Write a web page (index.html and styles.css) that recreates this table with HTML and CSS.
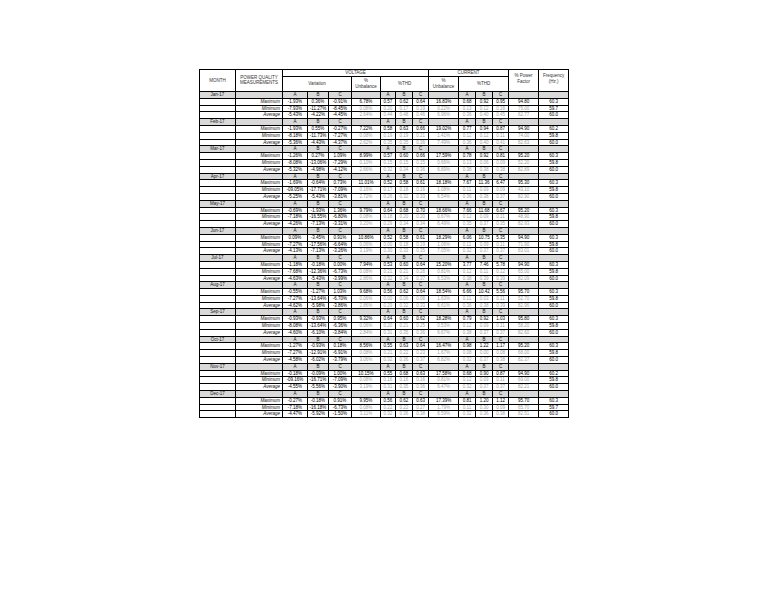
FILE: index.html
```html
<!DOCTYPE html>
<html>
<head>
<meta charset="utf-8">
<link rel="stylesheet" href="styles.css">
</head>
<body>
<table class="sheet">
<colgroup>
<col class="c-month"><col class="c-pq"><col class="c-va"><col class="c-vb"><col class="c-vc"><col class="c-vu"><col class="c-ta"><col class="c-tb"><col class="c-tc"><col class="c-cu"><col class="c-ca"><col class="c-cb"><col class="c-cc"><col class="c-pf"><col class="c-fr">
</colgroup>
<thead>
<tr class="h1">
<th rowspan="2">MONTH</th>
<th rowspan="2">POWER QUALITY<br>MEASUREMENTS</th>
<th colspan="7">VOLTAGE</th>
<th colspan="4">CURRENT</th>
<th rowspan="2" class="top">% Power<br>Factor</th>
<th rowspan="2" class="top">Frequency<br>(Hz.)</th>
</tr>
<tr class="h2">
<th colspan="3">Variation</th>
<th>%<br>Unbalance</th>
<th colspan="3">%THD</th>
<th>%<br>Unbalance</th>
<th colspan="3">%THD</th>
</tr>
</thead>
<tbody>
<tr class="mh"><td>Jan-17</td><td></td><td>A</td><td>B</td><td>C</td><td></td><td>A</td><td>B</td><td>C</td><td></td><td>A</td><td>B</td><td>C</td><td></td><td></td></tr>
<tr><td></td><td class="lbl">Maximum</td><td>-1.93%</td><td>0.36%</td><td>-0.91%</td><td>6.78%</td><td>0.57</td><td>0.62</td><td>0.64</td><td>16.83%</td><td>0.68</td><td>0.92</td><td>0.95</td><td>94.80</td><td>60.3</td></tr>
<tr class="lt"><td></td><td class="lbl">Minimum</td><td>-7.93%</td><td>-11.27%</td><td>-8.45%</td><td class="g">0.08%</td><td class="g">0.20</td><td class="g">0.17</td><td class="g">0.19</td><td class="g">0.22%</td><td class="g">0.13</td><td class="g">0.12</td><td class="g">0.16</td><td class="g">75.00</td><td>59.7</td></tr>
<tr class="lt"><td></td><td class="lbl">Average</td><td>-5.43%</td><td>-4.22%</td><td>-4.45%</td><td class="g">2.64%</td><td class="g">0.44</td><td class="g">0.48</td><td class="g">0.46</td><td class="g">6.96%</td><td class="g">0.36</td><td class="g">0.40</td><td class="g">0.45</td><td class="g">62.77</td><td>60.0</td></tr>

<tr class="mh"><td>Feb-17</td><td></td><td>A</td><td>B</td><td>C</td><td></td><td>A</td><td>B</td><td>C</td><td></td><td>A</td><td>B</td><td>C</td><td></td><td></td></tr>
<tr><td></td><td class="lbl">Maximum</td><td>-1.93%</td><td>0.55%</td><td>-0.27%</td><td>7.22%</td><td>0.58</td><td>0.63</td><td>0.66</td><td>19.02%</td><td>0.77</td><td>0.94</td><td>0.87</td><td>94.90</td><td>60.2</td></tr>
<tr class="lt"><td></td><td class="lbl">Minimum</td><td>-8.18%</td><td>-11.73%</td><td>-7.27%</td><td class="g">0.08%</td><td class="g">0.19</td><td class="g">0.19</td><td class="g">0.21</td><td class="g">1.41%</td><td class="g">0.12</td><td class="g">0.12</td><td class="g">0.11</td><td class="g">74.00</td><td>59.8</td></tr>
<tr class="lt"><td></td><td class="lbl">Average</td><td>-5.36%</td><td>-4.43%</td><td>-4.37%</td><td class="g">2.62%</td><td class="g">0.35</td><td class="g">0.35</td><td class="g">0.36</td><td class="g">7.49%</td><td class="g">0.36</td><td class="g">0.40</td><td class="g">0.41</td><td class="g">82.63</td><td>60.0</td></tr>

<tr class="mh"><td>Mar-17</td><td></td><td>A</td><td>B</td><td>C</td><td></td><td>A</td><td>B</td><td>C</td><td></td><td>A</td><td>B</td><td>C</td><td></td><td></td></tr>
<tr><td></td><td class="lbl">Maximum</td><td>-1.26%</td><td>0.27%</td><td>1.09%</td><td>8.99%</td><td>0.57</td><td>0.60</td><td>0.66</td><td>17.59%</td><td>0.78</td><td>0.92</td><td>0.81</td><td>95.20</td><td>60.3</td></tr>
<tr class="lt"><td></td><td class="lbl">Minimum</td><td>-8.08%</td><td>-13.06%</td><td>-7.29%</td><td class="g">0.10%</td><td class="g">0.15</td><td class="g">0.15</td><td class="g">0.15</td><td class="g">0.66%</td><td class="g">0.13</td><td class="g">0.06</td><td class="g">0.09</td><td class="g">52.20</td><td>59.8</td></tr>
<tr class="lt"><td></td><td class="lbl">Average</td><td>-5.32%</td><td>-4.98%</td><td>-4.12%</td><td class="g">2.66%</td><td class="g">0.32</td><td class="g">0.34</td><td class="g">0.36</td><td class="g">6.89%</td><td class="g">0.38</td><td class="g">0.38</td><td class="g">0.38</td><td class="g">82.89</td><td>60.0</td></tr>

<tr class="mh"><td>Apr-17</td><td></td><td>A</td><td>B</td><td>C</td><td></td><td>A</td><td>B</td><td>C</td><td></td><td>A</td><td>B</td><td>C</td><td></td><td></td></tr>
<tr><td></td><td class="lbl">Maximum</td><td>-1.69%</td><td>-0.64%</td><td>0.73%</td><td>11.01%</td><td>0.52</td><td>0.58</td><td>0.61</td><td>18.18%</td><td>7.67</td><td>11.36</td><td>6.47</td><td>95.30</td><td>60.3</td></tr>
<tr class="lt"><td></td><td class="lbl">Minimum</td><td>-09.05%</td><td>-17.71%</td><td>-7.09%</td><td class="g">0.16%</td><td class="g">0.17</td><td class="g">0.18</td><td class="g">0.16</td><td class="g">1.08%</td><td class="g">0.11</td><td class="g">0.09</td><td class="g">0.09</td><td class="g">43.10</td><td>59.8</td></tr>
<tr class="lt"><td></td><td class="lbl">Average</td><td>-5.25%</td><td>-5.43%</td><td>-3.81%</td><td class="g">2.72%</td><td class="g">0.26</td><td class="g">0.32</td><td class="g">0.33</td><td class="g">6.54%</td><td class="g">0.36</td><td class="g">0.38</td><td class="g">0.37</td><td class="g">82.90</td><td>60.0</td></tr>

<tr class="mh"><td>May-17</td><td></td><td>A</td><td>B</td><td>C</td><td></td><td>A</td><td>B</td><td>C</td><td></td><td>A</td><td>B</td><td>C</td><td></td><td></td></tr>
<tr><td></td><td class="lbl">Maximum</td><td>-0.69%</td><td>-1.93%</td><td>1.36%</td><td>9.79%</td><td>0.64</td><td>0.68</td><td>0.70</td><td>18.66%</td><td>7.66</td><td>11.68</td><td>6.67</td><td>95.20</td><td>60.3</td></tr>
<tr class="lt"><td></td><td class="lbl">Minimum</td><td>-7.18%</td><td>-16.55%</td><td>-6.80%</td><td class="g">0.08%</td><td class="g">0.18</td><td class="g">0.20</td><td class="g">0.20</td><td class="g">0.67%</td><td class="g">0.12</td><td class="g">0.09</td><td class="g">0.11</td><td class="g">48.90</td><td>59.8</td></tr>
<tr class="lt"><td></td><td class="lbl">Average</td><td>-4.26%</td><td>-7.13%</td><td>-3.31%</td><td class="g">3.20%</td><td class="g">0.29</td><td class="g">0.34</td><td class="g">0.34</td><td class="g">6.49%</td><td class="g">0.35</td><td class="g">0.37</td><td class="g">0.35</td><td class="g">82.93</td><td>60.0</td></tr>

<tr class="mh"><td>Jun-17</td><td></td><td>A</td><td>B</td><td>C</td><td></td><td>A</td><td>B</td><td>C</td><td></td><td>A</td><td>B</td><td>C</td><td></td><td></td></tr>
<tr><td></td><td class="lbl">Maximum</td><td>0.09%</td><td>-3.45%</td><td>0.91%</td><td>10.86%</td><td>0.52</td><td>0.58</td><td>0.61</td><td>18.29%</td><td>6.06</td><td>10.75</td><td>5.35</td><td>94.90</td><td>60.3</td></tr>
<tr class="lt"><td></td><td class="lbl">Minimum</td><td>-7.27%</td><td>-17.56%</td><td>-6.64%</td><td class="g">0.06%</td><td class="g">0.00</td><td class="g">0.18</td><td class="g">0.19</td><td class="g">1.06%</td><td class="g">0.11</td><td class="g">0.09</td><td class="g">0.11</td><td class="g">71.90</td><td>59.8</td></tr>
<tr class="lt"><td></td><td class="lbl">Average</td><td>-4.13%</td><td>-7.13%</td><td>-3.26%</td><td class="g">3.19%</td><td class="g">0.30</td><td class="g">0.33</td><td class="g">0.35</td><td class="g">7.05%</td><td class="g">0.32</td><td class="g">0.37</td><td class="g">0.37</td><td class="g">83.01</td><td>60.0</td></tr>

<tr class="mh"><td>Jul-17</td><td></td><td>A</td><td>B</td><td>C</td><td></td><td>A</td><td>B</td><td>C</td><td></td><td>A</td><td>B</td><td>C</td><td></td><td></td></tr>
<tr><td></td><td class="lbl">Maximum</td><td>-1.18%</td><td>-0.18%</td><td>0.00%</td><td>7.94%</td><td>0.53</td><td>0.60</td><td>0.64</td><td>15.20%</td><td>3.77</td><td>7.46</td><td>5.78</td><td>94.90</td><td>60.3</td></tr>
<tr class="lt"><td></td><td class="lbl">Minimum</td><td>-7.68%</td><td>-12.36%</td><td>-6.73%</td><td class="g">0.08%</td><td class="g">0.21</td><td class="g">0.21</td><td class="g">0.26</td><td class="g">0.81%</td><td class="g">0.12</td><td class="g">0.11</td><td class="g">0.12</td><td class="g">65.00</td><td>59.8</td></tr>
<tr class="lt"><td></td><td class="lbl">Average</td><td>-4.63%</td><td>-5.43%</td><td>-3.99%</td><td class="g">2.86%</td><td class="g">0.32</td><td class="g">0.34</td><td class="g">0.37</td><td class="g">6.53%</td><td class="g">0.38</td><td class="g">0.39</td><td class="g">0.39</td><td class="g">82.09</td><td>60.0</td></tr>

<tr class="mh"><td>Aug-17</td><td></td><td>A</td><td>B</td><td>C</td><td></td><td>A</td><td>B</td><td>C</td><td></td><td>A</td><td>B</td><td>C</td><td></td><td></td></tr>
<tr><td></td><td class="lbl">Maximum</td><td>-0.55%</td><td>-1.27%</td><td>1.03%</td><td>9.68%</td><td>0.56</td><td>0.62</td><td>0.64</td><td>18.54%</td><td>6.66</td><td>10.42</td><td>5.56</td><td>95.70</td><td>60.3</td></tr>
<tr class="lt"><td></td><td class="lbl">Minimum</td><td>-7.27%</td><td>-13.64%</td><td>-6.70%</td><td class="g">0.06%</td><td class="g">0.00</td><td class="g">0.06</td><td class="g">0.08</td><td class="g">1.63%</td><td class="g">0.11</td><td class="g">0.03</td><td class="g">0.11</td><td class="g">52.70</td><td>59.8</td></tr>
<tr class="lt"><td></td><td class="lbl">Average</td><td>-4.62%</td><td>-5.98%</td><td>-3.86%</td><td class="g">2.86%</td><td class="g">0.29</td><td class="g">0.32</td><td class="g">0.33</td><td class="g">6.61%</td><td class="g">0.36</td><td class="g">0.38</td><td class="g">0.39</td><td class="g">82.96</td><td>60.0</td></tr>

<tr class="mh"><td>Sep-17</td><td></td><td>A</td><td>B</td><td>C</td><td></td><td>A</td><td>B</td><td>C</td><td></td><td>A</td><td>B</td><td>C</td><td></td><td></td></tr>
<tr><td></td><td class="lbl">Maximum</td><td>-0.93%</td><td>-0.93%</td><td>0.95%</td><td>9.32%</td><td>0.64</td><td>0.60</td><td>0.62</td><td>18.28%</td><td>0.79</td><td>0.92</td><td>1.03</td><td>95.80</td><td>60.3</td></tr>
<tr class="lt"><td></td><td class="lbl">Minimum</td><td>-8.08%</td><td>-13.64%</td><td>-6.36%</td><td class="g">0.06%</td><td class="g">0.20</td><td class="g">0.21</td><td class="g">0.25</td><td class="g">0.53%</td><td class="g">0.12</td><td class="g">0.09</td><td class="g">0.11</td><td class="g">58.20</td><td>59.8</td></tr>
<tr class="lt"><td></td><td class="lbl">Average</td><td>-4.60%</td><td>-6.10%</td><td>-3.84%</td><td class="g">2.84%</td><td class="g">0.31</td><td class="g">0.35</td><td class="g">0.36</td><td class="g">6.67%</td><td class="g">0.38</td><td class="g">0.37</td><td class="g">0.37</td><td class="g">82.60</td><td>60.0</td></tr>

<tr class="mh"><td>Oct-17</td><td></td><td>A</td><td>B</td><td>C</td><td></td><td>A</td><td>B</td><td>C</td><td></td><td>A</td><td>B</td><td>C</td><td></td><td></td></tr>
<tr><td></td><td class="lbl">Maximum</td><td>-1.27%</td><td>-0.93%</td><td>0.18%</td><td>8.56%</td><td>0.55</td><td>0.63</td><td>0.64</td><td>16.47%</td><td>0.98</td><td>1.22</td><td>1.17</td><td>95.20</td><td>60.3</td></tr>
<tr class="lt"><td></td><td class="lbl">Minimum</td><td>-7.27%</td><td>-12.91%</td><td>-6.91%</td><td class="g">0.08%</td><td class="g">0.21</td><td class="g">0.22</td><td class="g">0.23</td><td class="g">1.67%</td><td class="g">0.08</td><td class="g">0.00</td><td class="g">0.08</td><td class="g">68.00</td><td>59.8</td></tr>
<tr class="lt"><td></td><td class="lbl">Average</td><td>-4.58%</td><td>-6.02%</td><td>-3.79%</td><td class="g">3.06%</td><td class="g">0.32</td><td class="g">0.36</td><td class="g">0.37</td><td class="g">6.82%</td><td class="g">0.32</td><td class="g">0.37</td><td class="g">0.38</td><td class="g">82.37</td><td>60.0</td></tr>

<tr class="mh"><td>Nov-17</td><td></td><td>A</td><td>B</td><td>C</td><td></td><td>A</td><td>B</td><td>C</td><td></td><td>A</td><td>B</td><td>C</td><td></td><td></td></tr>
<tr><td></td><td class="lbl">Maximum</td><td>-0.18%</td><td>-0.09%</td><td>1.00%</td><td>10.15%</td><td>0.55</td><td>0.68</td><td>0.63</td><td>17.58%</td><td>0.68</td><td>0.90</td><td>0.87</td><td>94.90</td><td>60.2</td></tr>
<tr class="lt"><td></td><td class="lbl">Minimum</td><td>-09.16%</td><td>-16.71%</td><td>-7.09%</td><td class="g">0.08%</td><td class="g">0.16</td><td class="g">0.16</td><td class="g">0.16</td><td class="g">0.81%</td><td class="g">0.12</td><td class="g">0.09</td><td class="g">0.11</td><td class="g">69.00</td><td>59.8</td></tr>
<tr class="lt"><td></td><td class="lbl">Average</td><td>-4.55%</td><td>-5.56%</td><td>-3.90%</td><td class="g">3.19%</td><td class="g">0.31</td><td class="g">0.35</td><td class="g">0.36</td><td class="g">6.47%</td><td class="g">0.32</td><td class="g">0.37</td><td class="g">0.37</td><td class="g">82.21</td><td>60.0</td></tr>

<tr class="mh"><td>Dec-17</td><td></td><td>A</td><td>B</td><td>C</td><td></td><td>A</td><td>B</td><td>C</td><td></td><td>A</td><td>B</td><td>C</td><td></td><td></td></tr>
<tr><td></td><td class="lbl">Maximum</td><td>-0.27%</td><td>-0.18%</td><td>0.91%</td><td>9.95%</td><td>0.56</td><td>0.62</td><td>0.63</td><td>17.39%</td><td>0.81</td><td>1.20</td><td>1.12</td><td>95.70</td><td>60.3</td></tr>
<tr class="lt"><td></td><td class="lbl">Minimum</td><td>-7.18%</td><td>-16.18%</td><td>-6.73%</td><td class="g">0.08%</td><td class="g">0.22</td><td class="g">0.22</td><td class="g">0.27</td><td class="g">1.79%</td><td class="g">0.11</td><td class="g">0.30</td><td class="g">0.09</td><td class="g">65.70</td><td>59.7</td></tr>
<tr class="lt"><td></td><td class="lbl">Average</td><td>-4.47%</td><td>-5.92%</td><td>-1.50%</td><td class="g">3.11%</td><td class="g">0.32</td><td class="g">0.36</td><td class="g">0.38</td><td class="g">6.59%</td><td class="g">0.32</td><td class="g">0.36</td><td class="g">0.38</td><td class="g">82.51</td><td>60.0</td></tr>
</tbody>
</table>
</body>
</html>
```

FILE: styles.css
```css
html, body {
  margin: 0;
  padding: 0;
  background: #ffffff;
}

body {
  font-family: "Liberation Sans", Arial, sans-serif;
}

.sheet {
  border-collapse: collapse;
  table-layout: fixed;
  width: 369px;
  margin: 69px 0 0 199px;
  font-size: 4.5px;
  color: #000;
}

.c-month { width: 36px; }
.c-pq { width: 47px; }
.c-va { width: 25px; }
.c-vb { width: 21px; }
.c-vc { width: 23px; }
.c-vu { width: 29px; }
.c-ta { width: 15px; }
.c-tb { width: 17px; }
.c-tc { width: 16px; }
.c-cu { width: 30px; }
.c-ca { width: 17px; }
.c-cb { width: 17px; }
.c-cc { width: 16px; }
.c-pf { width: 30px; }
.c-fr { width: 30px; }

.sheet th,
.sheet td {
  border: 1px solid #000;
  padding: 0;
  text-align: center;
  vertical-align: middle;
  white-space: nowrap;
  overflow: hidden;
  font-weight: normal;
}

.sheet th {
  color: #333;
  line-height: 5.5px;
}

.h1 th {
  height: 5.8px;
}

.h2 th {
  height: 14.2px;
}

.sheet th.top {
  vertical-align: top;
  padding-top: 3px;
}

.sheet td {
  height: 5.8px;
  line-height: 5.8px;
}

.mh td {
  background: #d9d9d9;
  color: #222;
}

.sheet td.lbl {
  text-align: right;
  padding-right: 2px;
  font-style: italic;
  color: #111;
}

.sheet td.g {
  color: #a0a0a0;
}
```
